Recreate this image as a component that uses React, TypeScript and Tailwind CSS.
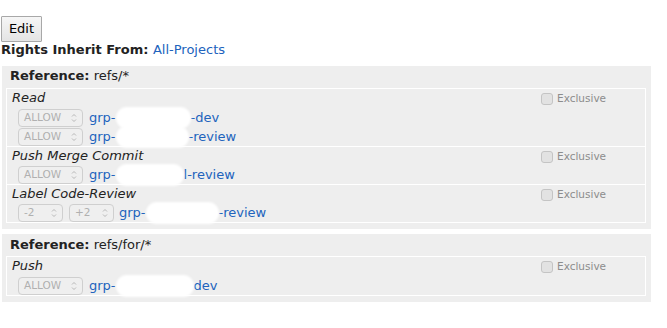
import React from 'react';

const font = { fontFamily: '"DejaVu Sans", Verdana, sans-serif' };

function Blob({ w }: { w: number }) {
  // redaction smear over the group name
  return (
    <span
      className="inline-block h-[22px] -my-[2px] bg-white rounded-full blur-[1px]"
      style={{ width: w }}
    />
  );
}

function Select({ label, w }: { label: string; w: string }) {
  return (
    <div
      className={`${w} h-[18px] flex items-center justify-between pl-[5px] pr-[5px] border border-[#cfcfcf] rounded-[4px] bg-[#efefef] text-[10.5px] text-[#b0b0b0]`}
    >
      <span>{label}</span>
      <svg width="6" height="12" viewBox="0 0 6 12" className="text-[#b8b8b8]">
        <path d="M1 4.5 L3 2.5 L5 4.5" fill="none" stroke="currentColor" strokeWidth="1" />
        <path d="M1 7.5 L3 9.5 L5 7.5" fill="none" stroke="currentColor" strokeWidth="1" />
      </svg>
    </div>
  );
}

function Exclusive() {
  return (
    <div className="w-[104px] flex items-center pt-[3px] h-[17px]">
      <span className="w-[12px] h-[12px] rounded-[3px] border border-[#c4c4c4] bg-[#e2e2e2]" />
      <span className="ml-[4px] text-[10.5px] text-[#8c8c8c]">Exclusive</span>
    </div>
  );
}

function Link({ children }: { children: React.ReactNode }) {
  return <a className="flex items-center text-[#2163bd] leading-[19px] whitespace-nowrap">{children}</a>;
}

function Permission({
  name,
  rules,
  first,
}: {
  name: string;
  rules: React.ReactNode[];
  first?: boolean;
}) {
  return (
    <div className={first ? '' : 'border-t border-white'}>
      <div className="flex justify-between">
        <div className="pl-[5px] italic leading-[17px] h-[17px]">{name}</div>
        <Exclusive />
      </div>
      <div className={first ? 'mt-[2px]' : 'mt-[1px]'}>
        {rules.map((r, i) => (
          <div key={i} className="h-[19px] pl-[11px] flex items-center">
            {r}
          </div>
        ))}
      </div>
    </div>
  );
}

export default function App() {
  return (
    <div className="min-h-screen bg-white text-[13px] text-[#222]" style={font}>
      <div className="pt-[16px] pl-[1px]">
        <button className="w-[41px] h-[26px] border border-[#a8a8a8] bg-gradient-to-b from-[#f6f6f6] to-[#e4e4e4] text-[13px] text-black rounded-[1px]">
          Edit
        </button>
      </div>
      <div className="pl-[1px] leading-[16px]">
        <span className="font-bold">Rights Inherit From: </span>
        <a className="text-[#2163bd]">All-Projects</a>
      </div>

      <div className="mt-[8px] ml-[2px] mr-[16px] bg-[#eeeeee] pt-[2px] pb-[6px] pl-[4px] pr-[5px]">
        <div className="pl-[4px] leading-[16px] mb-[4px]">
          <span className="font-bold">Reference:</span> refs/*
        </div>
        <div className="border border-white">
          <Permission
            first
            name="Read"
            rules={[
              <>
                <Select label="ALLOW" w="w-[65px]" />
                <span className="w-[6px]" />
                <Link>grp-<Blob w={75} />-dev</Link>
              </>,
              <>
                <Select label="ALLOW" w="w-[65px]" />
                <span className="w-[6px]" />
                <Link>grp-<Blob w={73} />-review</Link>
              </>,
            ]}
          />
          <Permission
            name="Push Merge Commit"
            rules={[
              <>
                <Select label="ALLOW" w="w-[65px]" />
                <span className="w-[6px]" />
                <Link>grp-<Blob w={68} />l-review</Link>
              </>,
            ]}
          />
          <Permission
            name="Label Code-Review"
            rules={[
              <>
                <Select label="-2" w="w-[45px]" />
                <span className="w-[6px]" />
                <Select label="+2" w="w-[45px]" />
                <span className="w-[5px]" />
                <Link>grp-<Blob w={73} />-review</Link>
              </>,
            ]}
          />
        </div>
      </div>

      <div className="mt-[5px] ml-[2px] mr-[16px] bg-[#eeeeee] pt-[3px] pb-[6px] pl-[4px] pr-[5px]">
        <div className="pl-[4px] leading-[16px] mb-[3px]">
          <span className="font-bold">Reference:</span> refs/for/*
        </div>
        <div className="border border-white">
          <Permission
            first
            name="Push"
            rules={[
              <>
                <Select label="ALLOW" w="w-[65px]" />
                <span className="w-[6px]" />
                <Link>grp-<Blob w={78} />dev</Link>
              </>,
            ]}
          />
        </div>
      </div>
    </div>
  );
}
